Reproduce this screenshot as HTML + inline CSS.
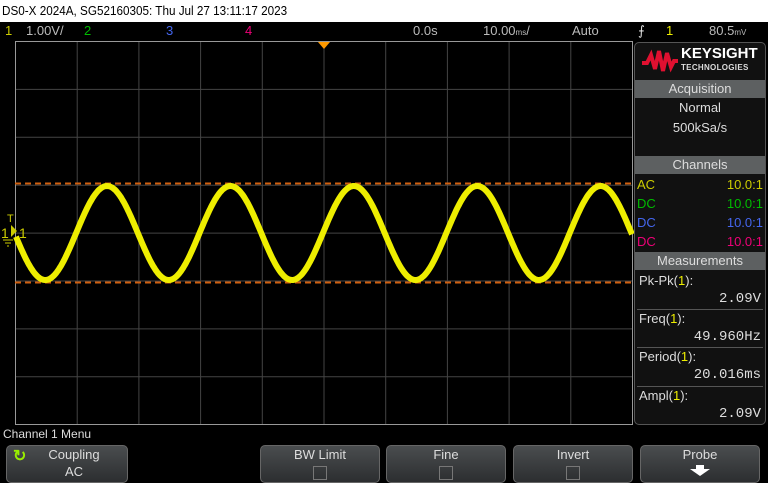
<!DOCTYPE html><html><head><style>
body{margin:0;width:768px;height:483px;background:#000;position:relative;overflow:hidden;font-family:"Liberation Sans",sans-serif;}
.a{position:absolute;white-space:nowrap}
.hdr{background:#5d6061;color:#ddd;font-size:13px;text-align:center;height:18px;line-height:18px}
.btn{position:absolute;top:445px;height:38px;background:linear-gradient(#4a4d4f,#2c2e30);border:1px solid #666;border-radius:5px;color:#ddd;font-size:13px;text-align:center;box-sizing:border-box;line-height:17px}
.cb{width:12px;height:12px;border:1px solid #777;margin:3px auto 0}
.m{color:#ddd;font-size:13px}
.v{color:#ddd;font-size:14px;font-family:"Liberation Mono",monospace}
</style></head><body>
<div class="a" style="left:0;top:0;width:768px;height:22px;background:#fff"></div>
<div class="a" style="left:2px;top:3px;font-size:13px;color:#000;transform:scaleX(.9);transform-origin:left">DS0-X 2024A, SG52160305: Thu Jul 27 13:11:17 2023</div>
<div class="a" style="top:23px;font-size:13px;left:5px;color:#cc0">1</div>
<div class="a" style="top:23px;font-size:13px;left:26px;color:#bbb">1.00V/</div>
<div class="a" style="top:23px;font-size:13px;left:84px;color:#0b0">2</div>
<div class="a" style="top:23px;font-size:13px;left:166px;color:#46e">3</div>
<div class="a" style="top:23px;font-size:13px;left:245px;color:#e07">4</div>
<div class="a" style="top:23px;font-size:13px;left:413px;color:#bbb">0.0s</div>
<div class="a" style="top:23px;font-size:13px;left:483px;color:#bbb">10.00<span style="font-size:8px">ms</span>/</div>
<div class="a" style="top:23px;font-size:13px;left:572px;color:#bbb">Auto</div>
<div class="a" style="top:23px;font-size:13px;left:638px;color:#ddd">⨍</div>
<div class="a" style="top:23px;font-size:13px;left:666px;color:#ee0">1</div>
<div class="a" style="top:23px;font-size:13px;left:709px;color:#bbb">80.5<span style="font-size:8px">mV</span></div>
<svg class="a" style="left:0;top:0" width="768" height="483" id="sv">
<rect x="15.5" y="41.5" width="617" height="383" fill="#000" stroke="#999"/>
<g id="grid" stroke="#444" stroke-width="1"></g>
<line x1="15" y1="183.5" x2="632" y2="183.5" stroke="#d06010" stroke-width="2" stroke-dasharray="6,4"/>
<line x1="15" y1="282.5" x2="632" y2="282.5" stroke="#d06010" stroke-width="2" stroke-dasharray="6,4"/>
<path id="wv" fill="none" stroke="#ee0" stroke-width="6"/>
<polygon points="318,42 330,42 324,49" fill="#f90"/>
<text x="7" y="222" fill="#cc0" font-size="11" font-family="Liberation Sans">T</text>
<text x="1" y="238" fill="#cc0" font-size="14" font-family="Liberation Sans">1</text>
<polygon points="11,225 17,231 11,237" fill="#cc0"/>
<text x="19" y="238" fill="#cc0" font-size="14" font-family="Liberation Sans">1</text>
<path d="M3 240h10M5 243h6M7 246h2" stroke="#cc0"/>
</svg>
<div class="a" style="left:634px;top:42px;width:132px;height:383px;background:#111;border:1px solid #555;border-radius:5px;box-sizing:border-box"></div>
<svg class="a" style="left:642px;top:47px" width="36" height="28"><path d="M0 16 L5 16 L9 8 L13 22 L17 4 L21 24 L25 6 L29 20 L32 14 L36 14" fill="none" stroke="#e01030" stroke-width="4"/></svg>
<div class="a" style="left:681px;top:45px;color:#fff;font-weight:bold;font-size:15px">KEYSIGHT</div>
<div class="a" style="left:681px;top:63px;color:#ddd;font-weight:bold;font-size:8px;letter-spacing:.3px">TECHNOLOGIES</div>
<div class="a hdr" style="left:635px;top:80px;width:130px">Acquisition</div>
<div class="a m" style="left:635px;width:130px;text-align:center;top:100px">Normal</div>
<div class="a m" style="left:635px;width:130px;text-align:center;top:120px">500kSa/s</div>
<div class="a hdr" style="left:635px;top:156px;width:130px">Channels</div>
<div class="a" style="left:637px;top:177px;font-size:13px;color:#cc0">AC</div><div class="a" style="right:5px;top:177px;font-size:13px;color:#cc0">10.0:1</div>
<div class="a" style="left:637px;top:196px;font-size:13px;color:#0b0">DC</div><div class="a" style="right:5px;top:196px;font-size:13px;color:#0b0">10.0:1</div>
<div class="a" style="left:637px;top:215px;font-size:13px;color:#46e">DC</div><div class="a" style="right:5px;top:215px;font-size:13px;color:#46e">10.0:1</div>
<div class="a" style="left:637px;top:234px;font-size:13px;color:#e07">DC</div><div class="a" style="right:5px;top:234px;font-size:13px;color:#e07">10.0:1</div>
<div class="a hdr" style="left:635px;top:252px;width:130px">Measurements</div>
<div class="a m" style="left:639px;top:273px">Pk-Pk(<span style="color:#ee0">1</span>):</div><div class="a v" style="right:7px;top:291px">2.09V</div>
<div class="a" style="left:637px;top:309px;width:126px;border-top:1px solid #555"></div>
<div class="a m" style="left:639px;top:311px">Freq(<span style="color:#ee0">1</span>):</div><div class="a v" style="right:7px;top:329px">49.960Hz</div>
<div class="a" style="left:637px;top:347px;width:126px;border-top:1px solid #555"></div>
<div class="a m" style="left:639px;top:349px">Period(<span style="color:#ee0">1</span>):</div><div class="a v" style="right:7px;top:367px">20.016ms</div>
<div class="a" style="left:637px;top:386px;width:126px;border-top:1px solid #555"></div>
<div class="a m" style="left:639px;top:388px">Ampl(<span style="color:#ee0">1</span>):</div><div class="a v" style="right:7px;top:406px">2.09V</div>
<div class="a" style="left:3px;top:427px;color:#ddd;font-size:12px">Channel 1 Menu</div>
<div class="btn" style="left:6px;width:122px;padding-left:14px"><span style="position:absolute;left:6px;top:2px;color:#9e0;font-size:16px;font-weight:bold">↻</span>Coupling<br>AC</div>
<div class="btn" style="left:260px;width:120px">BW Limit<div class="cb"></div></div>
<div class="btn" style="left:386px;width:120px">Fine<div class="cb"></div></div>
<div class="btn" style="left:513px;width:120px">Invert<div class="cb"></div></div>
<div class="btn" style="left:640px;width:120px">Probe<div style="margin:2px auto 0;width:8px;height:4px;background:#fff"></div><div style="margin:0 auto;width:0;height:0;border-left:10px solid transparent;border-right:10px solid transparent;border-top:7px solid #fff"></div></div>
<script>
var g=document.getElementById('grid'),s='';
for(var i=1;i<10;i++){var x=15.5+i*61.7;s+='<line x1="'+x+'" y1="42" x2="'+x+'" y2="424"/>';}
for(var j=1;j<8;j++){var y=41.5+j*47.9;s+='<line x1="16" y1="'+y+'" x2="632" y2="'+y+'"/>';}
g.innerHTML=s;
var d='';for(var x=16;x<=632;x+=1){var y=233-47*Math.cos(2*Math.PI*(x-107)/123.4);d+=(x==16?'M':'L')+x+' '+y.toFixed(1);}
document.getElementById('wv').setAttribute('d',d);
</script>
</body></html>
